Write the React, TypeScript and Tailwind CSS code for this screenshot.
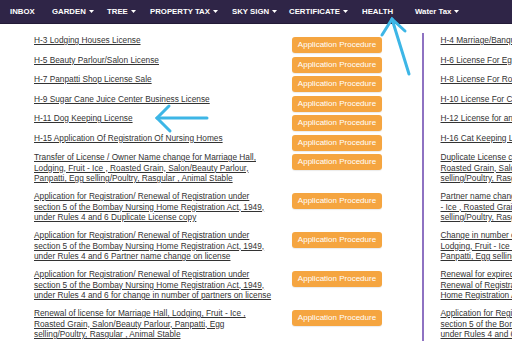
const nav = [
  { label: 'INBOX', w: 'w-[42px]', caret: false },
  { label: 'GARDEN', w: 'w-[55px]', caret: true },
  { label: 'TREE', w: 'w-[43px]', caret: true },
  { label: 'PROPERTY TAX', w: 'w-[82px]', caret: true },
  { label: 'SKY SIGN', w: 'w-[57px]', caret: true },
  { label: 'CERTIFICATE', w: 'w-[73px]', caret: true },
  { label: 'HEALTH', w: 'w-[53px]', caret: false },
  { label: 'Water Tax', w: 'w-[60px]', caret: true },
];

const left: string[][] = [
  ['H-3 Lodging Houses License'],
  ['H-5 Beauty Parlour/Salon License'],
  ['H-7 Panpatti Shop License Sale'],
  ['H-9 Sugar Cane Juice Center Business License'],
  ['H-11 Dog Keeping License'],
  ['H-15 Application Of Registration Of Nursing Homes'],
  [
    'Transfer of License / Owner Name change for Marriage Hall,',
    'Lodging, Fruit - Ice , Roasted Grain, Salon/Beauty Parlour,',
    'Panpatti, Egg selling/Poultry, Rasgular , Animal Stable',
  ],
  [
    'Application for Registration/ Renewal of Registration under',
    'section 5 of the Bombay Nursing Home Registration Act, 1949,',
    'under Rules 4 and 6 Duplicate License copy',
  ],
  [
    'Application for Registration/ Renewal of Registration under',
    'section 5 of the Bombay Nursing Home Registration Act, 1949,',
    'under Rules 4 and 6 Partner name change on license',
  ],
  [
    'Application for Registration/ Renewal of Registration under',
    'section 5 of the Bombay Nursing Home Registration Act, 1949,',
    'under Rules 4 and 6 for change in number of partners on license',
  ],
  [
    'Renewal of license for Marriage Hall, Lodging, Fruit - Ice ,',
    'Roasted Grain, Salon/Beauty Parlour, Panpatti, Egg',
    'selling/Poultry, Rasgular , Animal Stable',
  ],
];

const right: string[][] = [
  ['H-4 Marriage/Banquet Hall License'],
  ['H-6 License For Egg Selling/Poultry'],
  ['H-8 License For Roasted Grain'],
  ['H-10 License For Cremation'],
  ['H-12 License for animal stable'],
  ['H-16 Cat Keeping License'],
  [
    'Duplicate License copy for Marriage Hall, Lodging, Fruit - Ice ,',
    'Roasted Grain, Salon/Beauty Parlour, Panpatti, Egg',
    'selling/Poultry, Rasgular , Animal Stable',
  ],
  [
    'Partner name change for Marriage Hall, Lodging, Fruit',
    '- Ice , Roasted Grain, Salon/Beauty Parlour, Panpatti, Egg',
    'selling/Poultry, Rasgular , Animal Stable',
  ],
  [
    'Change in number of partners for Marriage Hall,',
    'Lodging, Fruit - Ice , Roasted Grain, Salon/Beauty Parlour,',
    'Panpatti, Egg selling/Poultry, Rasgular , Animal Stable',
  ],
  [
    'Renewal for expired license of Application for Registration/',
    'Renewal of Registration under section 5 of the Bombay Nursing',
    'Home Registration Act, 1949, under Rules 4 and 6',
  ],
  [
    'Application for Registration/ Renewal of Registration under',
    'section 5 of the Bombay Nursing Home Registration Act, 1949,',
    'under Rules 4 and 6 Duplicate License copy',
  ],
];

function Caret() {
  return (
    <svg width="5" height="3" viewBox="0 0 5 3" className="ml-[3px] inline-block">
      <path d="M0 0H5L2.5 3Z" fill="#ffffff" />
    </svg>
  );
}

function Row({ lines }: { lines: string[] }) {
  return (
    <div className="flex items-start">
      <div className="w-[258px] shrink-0 pb-[7.5px]">
        <a className="underline underline-offset-[1px] text-[#333333] whitespace-nowrap">
          {lines.map((l, i) => (
            <span key={i}>{l}{i < lines.length - 1 && <br />}</span>
          ))}
        </a>
      </div>
      <div className="pt-[2px] pb-[1.5px] shrink-0">
        <button className="w-[90px] h-[16px] rounded-[3px] bg-[#f5a540] text-white text-[8px] leading-[16px] text-center shadow-[0_1px_1px_rgba(0,0,0,0.08)]">
          Application Procedure
        </button>
      </div>
    </div>
  );
}

export default function App() {
  return (
    <div className="relative w-[512px] h-[341px] overflow-hidden bg-white font-['Liberation_Sans',Arial,sans-serif]">
      <div className="h-[24px] bg-[#2f2547] border-b border-[#231a37] flex items-center pl-[10px]">
        {nav.map(n => (
          <div key={n.label} className={`${n.w} shrink-0 flex items-center text-white font-bold text-[7.8px] whitespace-nowrap`}>
            {n.label}
            {n.caret && <Caret />}
          </div>
        ))}
      </div>

      <div className="flex pt-[11px] text-[8.3px] leading-[10.5px]">
        <div className="w-[422px] shrink-0 pl-[34px] flex flex-col">
          {left.map((l, i) => <Row key={i} lines={l} />)}
        </div>
        <div className="w-[1.5px] bg-[#8e72c2] shrink-0 -mt-[2px]" />
        <div className="pl-[17px] flex flex-col shrink-0">
          {right.map((l, i) => <Row key={i} lines={l} />)}
        </div>
      </div>

      <svg className="absolute inset-0 pointer-events-none" width="512" height="341" viewBox="0 0 512 341">
        <g stroke="#3db6e6" strokeWidth="3" strokeLinecap="round" fill="none">
          <path d="M392 19L409 74" />
          <path d="M382 35L392 19L405 31" />
          <path d="M157 118H207" />
          <path d="M169 106L157 118L170 131" />
        </g>
      </svg>
    </div>
  );
}
